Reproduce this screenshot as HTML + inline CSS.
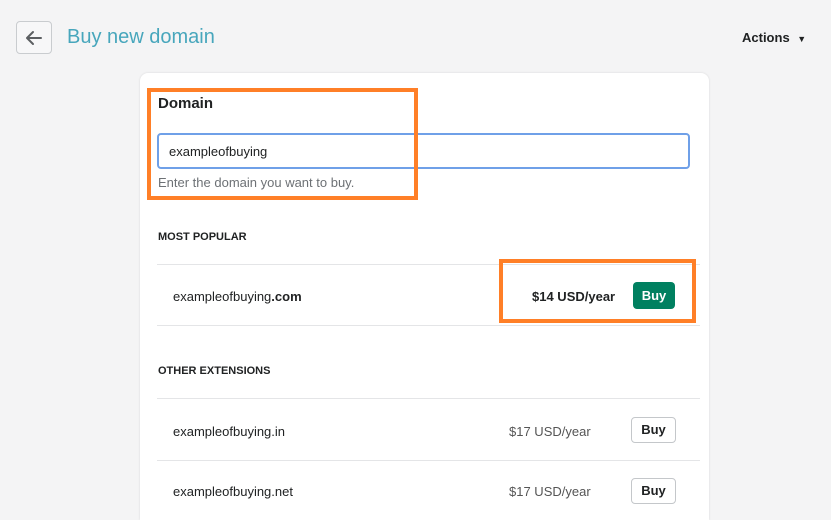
<!DOCTYPE html><html><head><style>
*{box-sizing:border-box;margin:0;padding:0}
html,body{width:831px;height:520px;overflow:hidden}
body{background:#f4f4f5;font-family:"Liberation Sans",sans-serif;position:relative;color:#202223}
.a{position:absolute}
.back{left:16px;top:21px;width:36px;height:33px;border:1px solid #c9cccf;border-radius:4px;background:#f7f7f8}
.card{left:140px;top:73px;width:569px;height:447px;background:#fff;border-radius:8px 8px 0 0;box-shadow:0 0 2px rgba(0,0,0,.12)}
.line{height:1px;background:#e4e5e7;left:157px;width:543px}
.t{font-size:13px;color:#202223}
.bo{border:4px solid #ff7f27}
.btn{width:45px;height:26px;border:1px solid #c4c7ca;border-radius:4px;font-size:13px;text-align:center;line-height:24px;background:#fff;font-weight:600}
</style></head><body>
<div class="a back"><svg width="34" height="31" viewBox="0 0 34 31"><path d="M24 16H11M16 10l-6 6 6 6" stroke="#5c5f62" stroke-width="2" fill="none" stroke-linecap="round" stroke-linejoin="round"/></svg></div>
<div class="a" style="left:67px;top:26px;font-size:20px;color:#47a6bc">Buy new domain</div>
<div class="a" style="left:742px;top:30px;font-size:13px;color:#202223;font-weight:600">Actions <span style="font-size:9px;margin-left:4px">▼</span></div>
<div class="a card"></div>
<div class="a" style="left:158px;top:95px;font-size:15px;font-weight:600">Domain</div>
<div class="a" style="left:157px;top:133px;width:533px;height:36px;border:2px solid #6fa0e8;border-radius:4px;padding:10px 10px;font-size:13px;line-height:13px">exampleofbuying</div>
<div class="a" style="left:158px;top:175px;font-size:13px;color:#6d7175">Enter the domain you want to buy.</div>
<div class="a bo" style="left:147px;top:88px;width:271px;height:112px"></div>
<div class="a" style="left:158px;top:231px;font-size:11px;font-weight:bold">MOST POPULAR</div>
<div class="a line" style="top:264px"></div>
<div class="a line" style="top:325px"></div>
<div class="a t" style="left:173px;top:289px">exampleofbuying<b style="font-weight:600">.com</b></div>
<div class="a" style="left:532px;top:289px;font-size:13px;font-weight:bold">$14 USD/year</div>
<div class="a" style="left:633px;top:282px;width:42px;height:27px;background:#008060;border-radius:4px;color:#fff;font-size:13px;text-align:center;line-height:27px;font-weight:600">Buy</div>
<div class="a bo" style="left:499px;top:259px;width:197px;height:64px"></div>
<div class="a" style="left:158px;top:365px;font-size:11px;font-weight:bold">OTHER EXTENSIONS</div>
<div class="a line" style="top:398px"></div>
<div class="a line" style="top:460px"></div>
<div class="a t" style="left:173px;top:424px">exampleofbuying<span>.in</span></div>
<div class="a t" style="left:509px;top:424px;color:#555">$17 USD/year</div>
<div class="a btn" style="left:631px;top:417px">Buy</div>
<div class="a t" style="left:173px;top:484px">exampleofbuying<span>.net</span></div>
<div class="a t" style="left:509px;top:484px;color:#555">$17 USD/year</div>
<div class="a btn" style="left:631px;top:478px">Buy</div>
</body></html>
